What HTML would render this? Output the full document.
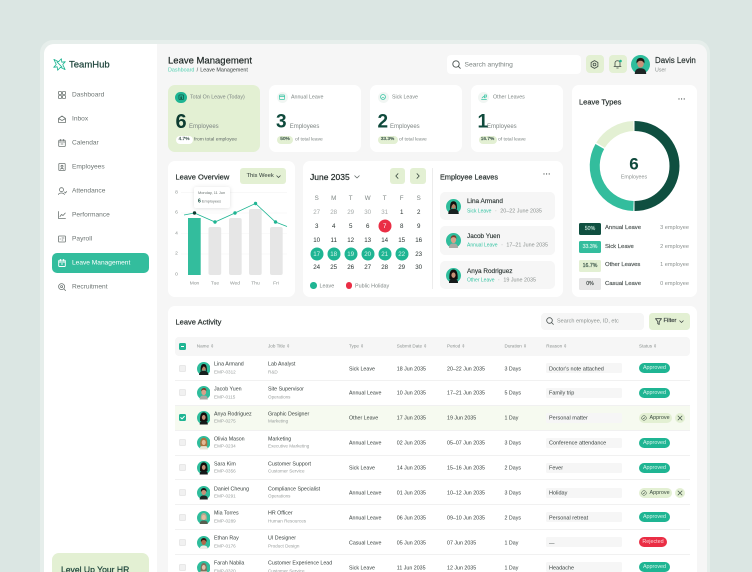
<!DOCTYPE html>
<html><head><meta charset="utf-8"><title>TeamHub Leave Management</title>
<style>
*{box-sizing:border-box;margin:0;padding:0}
html,body{width:752px;height:572px;overflow:hidden;background:#dbe6e3;font-family:"Liberation Sans",sans-serif;color:#2b3533}
#root{position:relative;width:752px;height:572px;overflow:hidden;background:#dbe6e3}
.a{position:absolute}
.t{position:absolute;white-space:nowrap;line-height:1;transform:translateY(calc(-50% + 1px))}
.c{text-align:center;transform:translate(-50%,calc(-50% + 1px))}
.r{transform:translate(-100%,calc(-50% + 1px))}
.m{-webkit-text-stroke:.2px currentColor}
.card{position:absolute;background:#fff;border-radius:7px}
.nav{font-size:6.6px;color:#6d7573;left:72px}
.ic{position:absolute;fill:none;stroke:#6d7573;stroke-width:1.4;stroke-linecap:round;stroke-linejoin:round}
.lab{font-size:5.3px;color:#7d8583}
.num{font-size:19px;font-weight:700;color:#0f4a3c;margin-top:-1px}
.emp{font-size:6px;color:#7d8583}
.pill{position:absolute;height:8px;border-radius:4px;background:#e3f0d3;font-size:4.8px;text-align:center;line-height:8.8px;color:#2f4a40;-webkit-text-stroke:.15px currentColor}
.sm{font-size:4.9px;color:#7d8583}
.ttl{font-size:7.5px;color:#27302e;-webkit-text-stroke:.2px currentColor}
.cal{font-size:6.2px;color:#2b3533}
.gr{color:#a6abaa}
.dot{position:absolute;width:13px;height:13px;border-radius:50%;background:#1fb593;transform:translate(-50%,-50%)}
.ax{font-size:4.9px;color:#8b918f}
.li{position:absolute;left:440px;width:115px;height:28.5px;background:#f6f6f6;border-radius:5px}
.row{position:absolute;left:175px;width:515px;height:24.9px;border-bottom:1.2px solid #f1f1f1}
.row .t{font-size:5.3px;color:#3a4240}
.row .s{font-size:4.6px;color:#9a9f9e}
.row .q{font-size:5.5px}
.cb{position:absolute;left:4px;top:8.5px;width:7px;height:7px;border-radius:1.5px;background:#f1f1f1;border:.6px solid #e8e8e8}
.av{position:absolute;left:21.5px;top:5.5px;width:13.5px;height:13.5px}
.rs{position:absolute;left:371px;top:7px;width:76px;height:10px;background:#f6f6f6;border-radius:1.5px}
.ok{position:absolute;left:464px;top:7px;width:31px;height:10px;border-radius:5px;background:#1fb593;color:#d5f3ea;font-size:5.4px;text-align:center;line-height:10.8px}
.no{position:absolute;left:464px;top:7px;width:28px;height:10px;border-radius:5px;background:#ea2e45;color:#ffd5da;font-size:5.4px;text-align:center;line-height:10.8px}
.ap{position:absolute;left:464px;top:7px;width:33px;height:10px;border-radius:5px;background:#e3f0d3;color:#3a4a40;font-size:5.4px;line-height:10.8px;padding-left:10.5px}
.xb{position:absolute;left:499.500px;top:7px;width:10px;height:10px;border-radius:50%;background:#e3f0d3}
.th{font-size:4.6px;color:#8b918f}
.leg{position:absolute;left:579px;width:22px;height:11.5px;border-radius:1.5px;font-size:5.2px;text-align:center;line-height:12.3px;-webkit-text-stroke:.15px currentColor}
.ll{font-size:5.9px;color:#4a5250;left:605px;-webkit-text-stroke:.15px currentColor}
.lv{font-size:5.6px;color:#8b918f;left:689px}
.ib{position:absolute;width:18px;height:18px;border-radius:4px;background:#e3f0d3}
.en{font-size:6.4px;color:#2b3533;left:467px;-webkit-text-stroke:.15px currentColor}
.ed{font-size:5.4px;left:467px;color:#8b918f}
.ed b{color:#35c4a3;font-weight:400;font-size:5px}
.ed i{font-style:normal;margin:0 3.500px}
</style></head>
<body><div id="root">
<svg width="0" height="0" style="position:absolute">
<symbol id="a1" viewBox="0 0 20 20"><circle cx="10" cy="10" r="10" fill="#2fbd9c"/><path d="M3 20c0-5 3-7 7-7s7 2 7 7z" fill="#17201f"/><ellipse cx="10" cy="9" rx="3.2" ry="4" fill="#b98367"/><path d="M5.5 14C5 6 6.500 3 10 3s5 3 4.500 11l-1.500-1c.5-3 0-5-3-6.500C8 8 7 10 7 13z" fill="#16110f"/></symbol>
<symbol id="a2" viewBox="0 0 20 20"><circle cx="10" cy="10" r="10" fill="#2fbd9c"/><path d="M4 20c0-5 3-6 6-6s6 1 6 6z" fill="#a9a9a4"/><ellipse cx="10" cy="9" rx="3.500" ry="4.500" fill="#d9a08a"/><path d="M6 8c0-3 2-5 4.500-5S14 5 14 8c-1-2-3-2.500-4-2.500S7 6 6 8z" fill="#7a3f2c"/></symbol>
<symbol id="a3" viewBox="0 0 20 20"><circle cx="10" cy="10" r="10" fill="#2fbd9c"/><path d="M4 20c0-4 2-6 6-6s6 2 6 6z" fill="#15191a"/><path d="M4.500 15C4 6 6 2 10 2s6 4 5.500 13z" fill="#14100f"/><ellipse cx="10" cy="9.500" rx="2.800" ry="3.600" fill="#c79076"/></symbol>
<symbol id="a4" viewBox="0 0 20 20"><circle cx="10" cy="10" r="10" fill="#2fbd9c"/><path d="M4 20c0-4 2-6 6-6s6 2 6 6z" fill="#e8e4d4"/><path d="M5 15C4 6 6 2.500 10 2.500S16 6 15 15z" fill="#a9733f"/><ellipse cx="10" cy="9.500" rx="3" ry="3.800" fill="#e5b894"/></symbol>
<symbol id="a5" viewBox="0 0 20 20"><circle cx="10" cy="10" r="10" fill="#2fbd9c"/><path d="M4 20c0-5 3-6 6-6s6 1 6 6z" fill="#1d2625"/><ellipse cx="10" cy="9" rx="3.500" ry="4.300" fill="#c99078"/><path d="M6 9c-1-4 1.500-6 4-6s5 2 4 6c-1-2-2-3-4-3S7 7 6 9z" fill="#1d1613"/></symbol>
<symbol id="a6" viewBox="0 0 20 20"><circle cx="10" cy="10" r="10" fill="#2fbd9c"/><path d="M4 20c0-5 3-6 6-6s6 1 6 6z" fill="#585f50"/><path d="M5.500 13C5 6 7 3 10 3s5 3 4.500 10z" fill="#b7a88f"/><ellipse cx="10" cy="9.500" rx="3" ry="3.800" fill="#e3bda0"/></symbol>
<symbol id="a7" viewBox="0 0 20 20"><circle cx="10" cy="10" r="10" fill="#2fbd9c"/><path d="M4 20c0-5 3-6 6-6s6 1 6 6z" fill="#efeee8"/><ellipse cx="10" cy="9" rx="3.500" ry="4.300" fill="#b2694c"/><path d="M6 9c-1-4 1.500-6 4-6s5 2 4 6c-1-2-2-3-4-3S7 7 6 9z" fill="#33170e"/></symbol>
<symbol id="a8" viewBox="0 0 20 20"><circle cx="10" cy="10" r="10" fill="#2fbd9c"/><path d="M4 20c0-5 3-7 6-7s6 2 6 7z" fill="#c9bfae"/><path d="M5.500 15C5 6 7 3 10 3s5 3 4.500 12z" fill="#81705d"/><ellipse cx="10" cy="9.500" rx="2.800" ry="3.600" fill="#e3c1aa"/></symbol>
<symbol id="ck" viewBox="0 0 10 10"><path d="M2.500 5.200l1.800 1.800 3.300-3.600" fill="none" stroke="#fff" stroke-width="1.400" stroke-linecap="round" stroke-linejoin="round"/></symbol>
<symbol id="apv" viewBox="0 0 10 10"><circle cx="5" cy="5" r="3.800" fill="none" stroke="#3a4a40" stroke-width=".9"/><path d="M3.300 5.100l1.200 1.200 2.200-2.400" fill="none" stroke="#3a4a40" stroke-width=".9"/></symbol>
<symbol id="xx" viewBox="0 0 10 10"><path d="M3 3l4 4M7 3l-4 4" fill="none" stroke="#4a5a50" stroke-width=".8" stroke-linecap="round"/></symbol>
</svg>

<!-- frame -->
<div class="a" style="left:40px;top:40px;width:670px;height:532px;background:#e6eeeb;border-radius:13px 13px 0 0"></div>
<div class="a" style="left:44px;top:44px;width:663px;height:528px;background:#f6f6f6;border-radius:10px 10px 0 0"></div>
<div class="a" style="left:44px;top:44px;width:113px;height:528px;background:#fff;border-radius:10px 0 0 0"></div>

<!-- logo -->
<svg class="a" style="left:53px;top:57.500px" width="13" height="13" viewBox="0 0 14 14" fill="none" stroke="#1fb593" stroke-width=".9" stroke-linejoin="round"><path d="M1 1.500L6 4 9 .8 9.500 4.500 13.200 4 10.500 7 13 12.500 8 10 5 13.200 4.500 9.500.8 10 3.500 7z"/><path d="M4 4l6 6"/></svg>
<div class="t m" style="left:69px;top:64px;font-size:9.500px;color:#173f36">TeamHub</div>

<!-- nav -->
<svg class="ic" style="left:58px;top:90.500px;stroke-width:.8" width="8" height="8" viewBox="0 0 8 8"><rect x=".5" y=".5" width="3" height="3" rx=".5"/><rect x="4.500" y=".5" width="3" height="3" rx=".5"/><rect x=".5" y="4.500" width="3" height="3" rx=".5"/><rect x="4.500" y="4.500" width="3" height="3" rx=".5"/></svg>
<div class="t nav" style="top:94.500px">Dashboard</div>
<svg class="ic" style="left:58px;top:114.500px;stroke-width:.8" width="8" height="8" viewBox="0 0 8 8"><path d="M.5 3.500L4 1l3.500 2.500v4h-7zM.5 3.500L4 5.500l3.500-2"/></svg>
<div class="t nav" style="top:118.500px">Inbox</div>
<svg class="ic" style="left:58px;top:138.500px;stroke-width:.8" width="8" height="8" viewBox="0 0 8 8"><rect x=".7" y="1.200" width="6.600" height="6.300" rx=".8"/><path d="M.7 3h6.600M2.500.4v1.400M5.500.4v1.400M3 5h2"/></svg>
<div class="t nav" style="top:142.500px">Calendar</div>
<svg class="ic" style="left:58px;top:162.500px;stroke-width:.8" width="8" height="8" viewBox="0 0 8 8"><rect x=".8" y=".5" width="6.400" height="7" rx=".7"/><circle cx="4" cy="3.300" r="1"/><path d="M2.400 6.200c.5-1 2.700-1 3.200 0"/></svg>
<div class="t nav" style="top:166.500px">Employees</div>
<svg class="ic" style="left:58px;top:186.500px;stroke-width:.8" width="9" height="8" viewBox="0 0 9 8"><circle cx="3.500" cy="2.700" r="2"/><path d="M.5 7.500c.5-2 5-2 6 0M6.500 5l1 1 1-1.500"/></svg>
<div class="t nav" style="top:190.500px">Attendance</div>
<svg class="ic" style="left:58px;top:210.500px;stroke-width:.8" width="8" height="8" viewBox="0 0 8 8"><path d="M.5.500v7h7M2 5.500L3.500 3.500 5 4.500 7.300 2"/></svg>
<div class="t nav" style="top:214.500px">Performance</div>
<svg class="ic" style="left:58px;top:234.500px;stroke-width:.8" width="8" height="8" viewBox="0 0 8 8"><rect x=".5" y="1" width="7" height="6" rx=".7"/><path d="M4 3h2M4 5h1M2 4h.5"/></svg>
<div class="t nav" style="top:238.500px">Payroll</div>
<div class="a" style="left:52px;top:252.500px;width:97px;height:20px;background:#33bd9d;border-radius:5px"></div>
<svg class="ic" style="left:58px;top:258.500px;stroke:#fff;stroke-width:.9" width="8" height="8" viewBox="0 0 8 8"><rect x=".7" y="1.200" width="6.600" height="6.300" rx=".8"/><path d="M.7 3h6.600M2.500.4v1.400M5.500.4v1.400M3.500 5h1"/></svg>
<div class="t nav" style="top:262.500px;color:#fff">Leave Management</div>
<svg class="ic" style="left:58px;top:282.500px;stroke-width:.8" width="8" height="8" viewBox="0 0 8 8"><circle cx="3.600" cy="3.600" r="3"/><circle cx="3.600" cy="3.600" r="1"/><path d="M6 6l1.600 1.600"/></svg>
<div class="t nav" style="top:286.500px">Recruitment</div>

<div class="a" style="left:52px;top:553px;width:97px;height:19px;background:#e3f0d3;border-radius:7px 7px 0 0;overflow:hidden"><div class="t m" style="left:9px;top:15.500px;font-size:8.600px;color:#173f36">Level Up Your HR</div></div>

<!-- header -->
<div class="t m" style="left:168px;top:59.500px;font-size:9.500px;color:#1d2624">Leave Management</div>
<div class="t" style="left:168px;top:69.800px;font-size:5.400px;color:#3a4240"><span style="color:#4fcfb0">Dashboard</span> <span style="margin:0 .7px">/</span> Leave Management</div>
<div class="a" style="left:447px;top:55px;width:134px;height:18.500px;background:#fff;border-radius:4px"></div>
<svg class="ic" style="left:452px;top:60px;stroke:#4a5250;stroke-width:.9" width="9" height="9" viewBox="0 0 9 9"><circle cx="4" cy="4" r="3.200"/><path d="M6.400 6.400L8.300 8.300"/></svg>
<div class="t" style="left:464.500px;top:64.700px;font-size:6.700px;color:#7d8583">Search anything</div>
<div class="ib" style="left:586px;top:55px"></div>
<svg class="ic" style="left:590px;top:59.500px;stroke:#3f4a46;stroke-width:.8" width="9" height="9" viewBox="0 0 9 9"><path d="M4.500.6l3.400 1.900v4L4.500 8.400 1.100 6.500v-4z"/><circle cx="4.500" cy="4.500" r="1.400"/></svg>
<div class="ib" style="left:608.500px;top:55px"></div>
<svg class="ic" style="left:613px;top:59px;stroke:#3f4a46;stroke-width:.8" width="10" height="10" viewBox="0 0 10 10"><path d="M2 7.500V4c0-3 5-3 5 0v3.500zM1 7.500h7M3.700 9h1.600"/><circle cx="7.500" cy="2" r="1.300" fill="#1fb593" stroke="none"/></svg>
<svg class="a" style="left:631px;top:55px" width="19" height="19"><use href="#a5"/></svg>
<div class="t m" style="left:655px;top:59.500px;font-size:7.900px;color:#2b3533">Davis Levin</div>
<div class="t" style="left:655px;top:69.800px;font-size:5.300px;color:#8b918f">User</div>

<!-- stat cards -->
<div class="card" style="left:168px;top:84.500px;width:92px;height:67px;background:#e3f0d3"></div>
<div class="a" style="left:175px;top:91.500px;width:11.500px;height:11.500px;border-radius:50%;background:#1fb593"></div>
<svg class="ic" style="left:177.500px;top:94px;stroke:#0f4a3c;stroke-width:.7" width="6.500" height="6.500" viewBox="0 0 7 7"><rect x="1" y="1" width="5" height="5" rx=".8"/><path d="M3 3h1v2H3z"/></svg>
<div class="t lab" style="left:190px;top:97px">Total On Leave (Today)</div>
<div class="t num" style="left:175.500px;top:121.500px;color:#0d3c31;font-size:20px">6</div>
<div class="t emp" style="left:189px;top:126px">Employees</div>
<div class="pill" style="left:175.500px;top:136px;width:17px;background:#fff">4.7%</div>
<div class="t sm" style="left:194px;top:140.200px;color:#5f6866">from total employee</div>

<div class="card" style="left:269px;top:84.500px;width:92px;height:67px"></div>
<div class="a" style="left:276.500px;top:91.500px;width:11px;height:11px;border-radius:50%;background:#f1f6f3"></div>
<svg class="ic" style="left:279px;top:94px;stroke:#35c4a3;stroke-width:.7" width="6" height="6" viewBox="0 0 6 6"><rect x=".5" y="1" width="5" height="4.500" rx=".5"/><path d="M.5 2.500h5"/></svg>
<div class="t lab" style="left:291px;top:97px">Annual Leave</div>
<div class="t num" style="left:276px;top:121.500px">3</div>
<div class="t emp" style="left:289.700px;top:126px">Employees</div>
<div class="pill" style="left:277px;top:136px;width:16px">50%</div>
<div class="t sm" style="left:295px;top:140.200px">of total leave</div>

<div class="card" style="left:370px;top:84.500px;width:92px;height:67px"></div>
<div class="a" style="left:377.500px;top:91.500px;width:11px;height:11px;border-radius:50%;background:#f1f6f3"></div>
<svg class="ic" style="left:380px;top:94px;stroke:#35c4a3;stroke-width:.7" width="6" height="6" viewBox="0 0 6 6"><circle cx="3" cy="3" r="2.500"/><path d="M1.800 4c.6-.6 1.800-.6 2.400 0"/></svg>
<div class="t lab" style="left:392px;top:97px">Sick Leave</div>
<div class="t num" style="left:377.500px;top:121.500px">2</div>
<div class="t emp" style="left:390px;top:126px">Employees</div>
<div class="pill" style="left:377.500px;top:136px;width:20px">33.3%</div>
<div class="t sm" style="left:399px;top:140.200px">of total leave</div>

<div class="card" style="left:471px;top:84.500px;width:92px;height:67px"></div>
<div class="a" style="left:478px;top:91.500px;width:11px;height:11px;border-radius:50%;background:#f1f6f3"></div>
<svg class="ic" style="left:480.500px;top:94px;stroke:#35c4a3;stroke-width:.7" width="6" height="6" viewBox="0 0 6 6"><path d="M.5 5.500h5M1 4l1.500-1.500L4 4M3.500 1h2v2h-2z"/></svg>
<div class="t lab" style="left:493px;top:97px">Other Leaves</div>
<div class="t num" style="left:477.500px;top:121.500px">1</div>
<div class="t emp" style="left:487px;top:126px">Employees</div>
<div class="pill" style="left:478.500px;top:136px;width:18px">16.7%</div>
<div class="t sm" style="left:498px;top:140.200px">of total leave</div>

<!-- leave types -->
<div class="card" style="left:572px;top:84.500px;width:125px;height:212px"></div>
<div class="t ttl" style="left:579px;top:101px">Leave Types</div>
<div class="t" style="left:682px;top:99.500px;font-size:7px;font-weight:700;transform:translate(-50%,-50%);color:#3a4240;letter-spacing:.3px">···</div>
<svg class="a" style="left:584px;top:116px" width="100" height="100" viewBox="0 0 100 100" fill="none" stroke-width="10">
<path d="M50.500 10A40 40 0 0 1 50.500 90" stroke="#0f4f40"/>
<path d="M49.500 90A40 40 0 0 1 15.800 30.500" stroke="#33bd9d"/>
<path d="M16.500 29.200A40 40 0 0 1 49.500 10" stroke="#e3f0d3"/>
</svg>
<div class="t c" style="left:634px;top:162.500px;font-size:17px;font-weight:700;color:#0f4a3c">6</div>
<div class="t c" style="left:634px;top:176.500px;font-size:5.300px;color:#8b918f">Employees</div>
<div class="leg" style="top:223px;background:#0f4f40;color:#bfe0d4">50%</div>
<div class="t ll" style="top:228.400px">Annual Leave</div><div class="t lv r" style="top:228.400px">3 employee</div>
<div class="leg" style="top:241.300px;background:#33bd9d;color:#d5f3ea">33.3%</div>
<div class="t ll" style="top:246.900px">Sick Leave</div><div class="t lv r" style="top:246.900px">2 employee</div>
<div class="leg" style="top:260px;background:#e3f0d3;color:#2f4a40">16.7%</div>
<div class="t ll" style="top:265.400px">Other Leaves</div><div class="t lv r" style="top:265.400px">1 employee</div>
<div class="leg" style="top:278.300px;background:#e6e6e6;color:#3a4240">0%</div>
<div class="t ll" style="top:283.900px">Casual Leave</div><div class="t lv r" style="top:283.900px">0 employee</div>

<!-- overview -->
<div class="card" style="left:168px;top:161px;width:127px;height:136px"></div>
<div class="t ttl" style="left:175.500px;top:176px">Leave Overview</div>
<div class="a" style="left:240px;top:168px;width:46px;height:16px;background:#e3f0d3;border-radius:3px"></div>
<div class="t" style="left:246.500px;top:176.200px;font-size:5.800px;color:#2b3533">This Week</div>
<svg class="ic" style="left:276px;top:174.500px;stroke:#3a4240;stroke-width:.7" width="5" height="3.500" viewBox="0 0 5 3.500"><path d="M.7.700L2.500 2.500 4.300.7"/></svg>
<svg class="a" style="left:168px;top:161px" width="127" height="136" viewBox="168 161 127 136" fill="none">
<g stroke="#f5f5f5" stroke-width=".6"><path d="M181 192.600H287M181 213H287M181 233.500H287M181 254H287"/></g>
<rect x="188" y="218" width="12.700" height="57" fill="#33bd9d"/>
<rect x="208.500" y="227" width="12.700" height="48" rx="2" fill="#e6e6e6"/>
<rect x="229" y="218" width="12.700" height="57" rx="2" fill="#e6e6e6"/>
<rect x="249" y="209" width="12.700" height="66" rx="2" fill="#e6e6e6"/>
<rect x="270" y="227" width="12.700" height="48" rx="2" fill="#e6e6e6"/>
<path d="M184 215L194.500 213L215 222L235 213L255.500 203.500L275.500 222L287 226.500" stroke="#1fb593" stroke-width=".8"/>
<g fill="#1fb593"><circle cx="215" cy="222" r="1.700"/><circle cx="235" cy="213" r="1.700"/><circle cx="255.500" cy="203.500" r="1.700"/><circle cx="275.500" cy="222" r="1.700"/></g>
<circle cx="194.500" cy="213" r="1.700" fill="#0d3c31"/>
</svg>
<div class="t ax c" style="left:176.500px;top:192.500px">8</div>
<div class="t ax c" style="left:176.500px;top:213px">6</div>
<div class="t ax c" style="left:176.500px;top:233.500px">4</div>
<div class="t ax c" style="left:176.500px;top:254px">2</div>
<div class="t ax c" style="left:176.500px;top:275px">0</div>
<div class="t ax c" style="left:194.500px;top:284.300px">Mon</div>
<div class="t ax c" style="left:215px;top:284.300px">Tue</div>
<div class="t ax c" style="left:235px;top:284.300px">Wed</div>
<div class="t ax c" style="left:255.500px;top:284.300px">Thu</div>
<div class="t ax c" style="left:276px;top:284.300px">Fri</div>
<div class="a" style="left:194px;top:187px;width:36px;height:20.500px;background:#fff;border-radius:2px;box-shadow:0 .5px 4px rgba(0,0,0,.13)"></div>
<div class="t" style="left:198px;top:192.300px;font-size:3.900px;color:#6d7573">Monday, 11 Jun</div>
<div class="t" style="left:198px;top:200.500px;font-size:3.900px;color:#6d7573"><b style="font-size:5px;color:#0f4a3c">6</b>&nbsp;Employees</div>

<!-- calendar -->
<div class="card" style="left:303px;top:161px;width:260px;height:136px"></div>
<div class="a" style="left:432px;top:168px;width:.8px;height:121px;background:#ececec"></div>
<div class="t m" style="left:310px;top:175.800px;font-size:8.500px;color:#1d2624">June 2035</div>
<svg class="ic" style="left:354px;top:175px;stroke:#5a6260;stroke-width:.7" width="6" height="4" viewBox="0 0 6 4"><path d="M.7.700L3 3l2.300-2.300"/></svg>
<div class="a" style="left:389.500px;top:168px;width:15.500px;height:16px;border-radius:3px;background:#e3f0d3"></div>
<div class="a" style="left:410px;top:168px;width:15.500px;height:16px;border-radius:3px;background:#e3f0d3"></div>
<svg class="ic" style="left:395px;top:173px;stroke:#3a4a40;stroke-width:.8" width="4" height="6" viewBox="0 0 4 6"><path d="M3 .7L.8 3 3 5.300"/></svg>
<svg class="ic" style="left:416px;top:173px;stroke:#3a4a40;stroke-width:.8" width="4" height="6" viewBox="0 0 4 6"><path d="M1 .7L3.200 3 1 5.300"/></svg>

<div class="t cal c" style="left:316.700px;top:198.300px;color:#7d8583">S</div><div class="t cal c" style="left:333.700px;top:198.300px;color:#7d8583">M</div><div class="t cal c" style="left:350.700px;top:198.300px;color:#7d8583">T</div><div class="t cal c" style="left:367.700px;top:198.300px;color:#7d8583">W</div><div class="t cal c" style="left:384.700px;top:198.300px;color:#7d8583">T</div><div class="t cal c" style="left:401.700px;top:198.300px;color:#7d8583">F</div><div class="t cal c" style="left:418.700px;top:198.300px;color:#7d8583">S</div>

<div class="t cal c gr" style="left:316.700px;top:212.300px">27</div><div class="t cal c gr" style="left:333.700px;top:212.300px">28</div><div class="t cal c gr" style="left:350.700px;top:212.300px">29</div><div class="t cal c gr" style="left:367.700px;top:212.300px">30</div><div class="t cal c gr" style="left:384.700px;top:212.300px">31</div><div class="t cal c" style="left:401.700px;top:212.300px">1</div><div class="t cal c" style="left:418.700px;top:212.300px">2</div>

<div class="t cal c" style="left:316.700px;top:226px">3</div><div class="t cal c" style="left:333.700px;top:226px">4</div><div class="t cal c" style="left:350.700px;top:226px">5</div><div class="t cal c" style="left:367.700px;top:226px">6</div>
<div class="dot" style="left:384.700px;top:226.300px;background:#ea2e45"></div><div class="t cal c" style="left:384.700px;top:226px;color:#fff">7</div>
<div class="t cal c" style="left:401.700px;top:226px">8</div><div class="t cal c" style="left:418.700px;top:226px">9</div>

<div class="t cal c" style="left:316.700px;top:239.800px">10</div><div class="t cal c" style="left:333.700px;top:239.800px">11</div><div class="t cal c" style="left:350.700px;top:239.800px">12</div><div class="t cal c" style="left:367.700px;top:239.800px">13</div><div class="t cal c" style="left:384.700px;top:239.800px">14</div><div class="t cal c" style="left:401.700px;top:239.800px">15</div><div class="t cal c" style="left:418.700px;top:239.800px">16</div>

<div class="dot" style="left:316.700px;top:253.800px"></div><div class="t cal c" style="left:316.700px;top:253.500px;color:#d5f3ea">17</div>
<div class="dot" style="left:333.700px;top:253.800px"></div><div class="t cal c" style="left:333.700px;top:253.500px;color:#d5f3ea">18</div>
<div class="dot" style="left:350.700px;top:253.800px"></div><div class="t cal c" style="left:350.700px;top:253.500px;color:#d5f3ea">19</div>
<div class="dot" style="left:367.700px;top:253.800px"></div><div class="t cal c" style="left:367.700px;top:253.500px;color:#d5f3ea">20</div>
<div class="dot" style="left:384.700px;top:253.800px"></div><div class="t cal c" style="left:384.700px;top:253.500px;color:#d5f3ea">21</div>
<div class="dot" style="left:401.700px;top:253.800px"></div><div class="t cal c" style="left:401.700px;top:253.500px;color:#d5f3ea">22</div>
<div class="t cal c" style="left:418.700px;top:253.500px">23</div>

<div class="t cal c" style="left:316.700px;top:267.300px">24</div><div class="t cal c" style="left:333.700px;top:267.300px">25</div><div class="t cal c" style="left:350.700px;top:267.300px">26</div><div class="t cal c" style="left:367.700px;top:267.300px">27</div><div class="t cal c" style="left:384.700px;top:267.300px">28</div><div class="t cal c" style="left:401.700px;top:267.300px">29</div><div class="t cal c" style="left:418.700px;top:267.300px">30</div>

<div class="a" style="left:310.300px;top:282.300px;width:6.500px;height:6.500px;border-radius:50%;background:#1fb593"></div>
<div class="t" style="left:319.500px;top:285.500px;font-size:5.400px;color:#7d8583">Leave</div>
<div class="a" style="left:345.500px;top:282.300px;width:6.500px;height:6.500px;border-radius:50%;background:#ea2e45"></div>
<div class="t" style="left:355px;top:285.500px;font-size:5.400px;color:#7d8583">Public Holiday</div>

<!-- employee leaves -->
<div class="t ttl" style="left:440px;top:176px;font-size:7.300px">Employee Leaves</div>
<div class="t" style="left:547px;top:174.500px;font-size:7px;font-weight:700;transform:translate(-50%,-50%);color:#3a4240;letter-spacing:.3px">···</div>
<div class="li" style="top:191.700px"></div>
<svg class="a" style="left:446px;top:198.500px" width="15" height="15"><use href="#a1"/></svg>
<div class="t en" style="top:201.300px">Lina Armand</div>
<div class="t ed" style="top:210.500px"><b>Sick Leave</b><i>·</i>20–22 June 2035</div>
<div class="li" style="top:226px"></div>
<svg class="a" style="left:446px;top:233px" width="15" height="15"><use href="#a2"/></svg>
<div class="t en" style="top:236.300px">Jacob Yuen</div>
<div class="t ed" style="top:245px"><b>Annual Leave</b><i>·</i>17–21 June 2035</div>
<div class="li" style="top:260.800px"></div>
<svg class="a" style="left:446px;top:267.500px" width="15" height="15"><use href="#a3"/></svg>
<div class="t en" style="top:270.800px">Anya Rodriguez</div>
<div class="t ed" style="top:279.800px"><b>Other Leave</b><i>·</i>19 June 2035</div>

<!-- table -->
<div class="card" style="left:168px;top:306px;width:529px;height:266px;border-radius:7px 7px 0 0"></div>
<div class="t ttl" style="left:175.500px;top:320.800px">Leave Activity</div>
<div class="a" style="left:541px;top:313px;width:103px;height:16.500px;background:#f6f6f6;border-radius:4px"></div>
<svg class="ic" style="left:546px;top:317px;stroke:#4a5250;stroke-width:.8" width="8" height="8" viewBox="0 0 8 8"><circle cx="3.500" cy="3.500" r="2.800"/><path d="M5.600 5.600L7.400 7.400"/></svg>
<div class="t" style="left:557px;top:321px;font-size:5.500px;color:#8b918f">Search employee, ID, etc</div>
<div class="a" style="left:649px;top:313px;width:41px;height:16.500px;background:#e3f0d3;border-radius:3.500px"></div>
<svg class="ic" style="left:655px;top:317.500px;stroke:#3a4240;stroke-width:.8" width="7" height="7" viewBox="0 0 7 7"><path d="M.5.700h6L4.200 3.500v3l-1.400-.8V3.500z"/></svg>
<div class="t m" style="left:663.500px;top:321px;font-size:5.800px;color:#3a4240">Filter</div>
<svg class="ic" style="left:679px;top:320px;stroke:#3a4240;stroke-width:.7" width="5" height="3.500" viewBox="0 0 5 3.500"><path d="M.7.700L2.500 2.500 4.300.7"/></svg>

<div class="a" style="left:175px;top:336.500px;width:515px;height:19.500px;background:#f6f6f6;border-radius:4px"></div>
<div class="a" style="left:179px;top:343px;width:7px;height:7px;border-radius:1.500px;background:#1fb593"></div>
<div class="a" style="left:180.800px;top:346px;width:3.400px;height:1px;background:#fff"></div>
<div class="t th" style="left:196.800px;top:345.700px">Name ⇕</div>
<div class="t th" style="left:268px;top:345.700px">Job Title ⇕</div>
<div class="t th" style="left:349px;top:345.700px">Type ⇕</div>
<div class="t th" style="left:396.800px;top:345.700px">Submit Date ⇕</div>
<div class="t th" style="left:447px;top:345.700px">Period ⇕</div>
<div class="t th" style="left:504.500px;top:345.700px">Duration ⇕</div>
<div class="t th" style="left:546.300px;top:345.700px">Reason ⇕</div>
<div class="t th" style="left:639px;top:345.700px">Status ⇕</div>

<div class="row" style="top:356px">
<div class="cb"></div><svg class="av"><use href="#a1"/></svg>
<div class="t" style="left:39px;top:8px">Lina Armand</div><div class="t s" style="left:39px;top:15.700px">EMP-0312</div>
<div class="t" style="left:93px;top:8px">Lab Analyst</div><div class="t s" style="left:93px;top:15.700px">R&amp;D</div>
<div class="t" style="left:174px;top:12.600px">Sick Leave</div><div class="t" style="left:221.800px;top:12.600px">18 Jun 2035</div><div class="t" style="left:272px;top:12.600px">20–22 Jun 2035</div><div class="t" style="left:329.500px;top:12.600px">3 Days</div>
<div class="rs"></div><div class="t q" style="left:374px;top:12.600px">Doctor's note attached</div>
<div class="ok">Approved</div></div>

<div class="row" style="top:380.900px">
<div class="cb"></div><svg class="av"><use href="#a2"/></svg>
<div class="t" style="left:39px;top:8px">Jacob Yuen</div><div class="t s" style="left:39px;top:15.700px">EMP-0115</div>
<div class="t" style="left:93px;top:8px">Site Supervisor</div><div class="t s" style="left:93px;top:15.700px">Operations</div>
<div class="t" style="left:174px;top:12.600px">Annual Leave</div><div class="t" style="left:221.800px;top:12.600px">10 Jun 2035</div><div class="t" style="left:272px;top:12.600px">17–21 Jun 2035</div><div class="t" style="left:329.500px;top:12.600px">5 Days</div>
<div class="rs"></div><div class="t q" style="left:374px;top:12.600px">Family trip</div>
<div class="ok">Approved</div></div>

<div class="row" style="top:405.800px;background:#f6faf0">
<div class="cb" style="background:#1fb593;border:0"><svg width="7" height="7" style="display:block"><use href="#ck"/></svg></div><svg class="av"><use href="#a3"/></svg>
<div class="t" style="left:39px;top:8px">Anya Rodriguez</div><div class="t s" style="left:39px;top:15.700px">EMP-0275</div>
<div class="t" style="left:93px;top:8px">Graphic Designer</div><div class="t s" style="left:93px;top:15.700px">Marketing</div>
<div class="t" style="left:174px;top:12.600px">Other Leave</div><div class="t" style="left:221.800px;top:12.600px">17 Jun 2035</div><div class="t" style="left:272px;top:12.600px">19 Jun 2035</div><div class="t" style="left:329.500px;top:12.600px">1 Day</div>
<div class="rs"></div><div class="t q" style="left:374px;top:12.600px">Personal matter</div>
<div class="ap">Approve<svg class="a" style="left:2px;top:2px" width="6" height="6"><use href="#apv"/></svg></div><div class="xb"><svg width="10" height="10" style="display:block"><use href="#xx"/></svg></div></div>

<div class="row" style="top:430.700px">
<div class="cb"></div><svg class="av"><use href="#a4"/></svg>
<div class="t" style="left:39px;top:8px">Olivia Mason</div><div class="t s" style="left:39px;top:15.700px">EMP-0234</div>
<div class="t" style="left:93px;top:8px">Marketing</div><div class="t s" style="left:93px;top:15.700px">Executive Marketing</div>
<div class="t" style="left:174px;top:12.600px">Annual Leave</div><div class="t" style="left:221.800px;top:12.600px">02 Jun 2035</div><div class="t" style="left:272px;top:12.600px">05–07 Jun 2035</div><div class="t" style="left:329.500px;top:12.600px">3 Days</div>
<div class="rs"></div><div class="t q" style="left:374px;top:12.600px">Conference attendance</div>
<div class="ok">Approved</div></div>

<div class="row" style="top:455.600px">
<div class="cb"></div><svg class="av"><use href="#a3"/></svg>
<div class="t" style="left:39px;top:8px">Sara Kim</div><div class="t s" style="left:39px;top:15.700px">EMP-0356</div>
<div class="t" style="left:93px;top:8px">Customer Support</div><div class="t s" style="left:93px;top:15.700px">Customer Service</div>
<div class="t" style="left:174px;top:12.600px">Sick Leave</div><div class="t" style="left:221.800px;top:12.600px">14 Jun 2035</div><div class="t" style="left:272px;top:12.600px">15–16 Jun 2035</div><div class="t" style="left:329.500px;top:12.600px">2 Days</div>
<div class="rs"></div><div class="t q" style="left:374px;top:12.600px">Fever</div>
<div class="ok">Approved</div></div>

<div class="row" style="top:480.500px">
<div class="cb"></div><svg class="av"><use href="#a5"/></svg>
<div class="t" style="left:39px;top:8px">Daniel Cheung</div><div class="t s" style="left:39px;top:15.700px">EMP-0291</div>
<div class="t" style="left:93px;top:8px">Compliance Specialist</div><div class="t s" style="left:93px;top:15.700px">Operations</div>
<div class="t" style="left:174px;top:12.600px">Annual Leave</div><div class="t" style="left:221.800px;top:12.600px">01 Jun 2035</div><div class="t" style="left:272px;top:12.600px">10–12 Jun 2035</div><div class="t" style="left:329.500px;top:12.600px">3 Days</div>
<div class="rs"></div><div class="t q" style="left:374px;top:12.600px">Holiday</div>
<div class="ap">Approve<svg class="a" style="left:2px;top:2px" width="6" height="6"><use href="#apv"/></svg></div><div class="xb"><svg width="10" height="10" style="display:block"><use href="#xx"/></svg></div></div>

<div class="row" style="top:505.400px">
<div class="cb"></div><svg class="av"><use href="#a6"/></svg>
<div class="t" style="left:39px;top:8px">Mia Torres</div><div class="t s" style="left:39px;top:15.700px">EMP-0289</div>
<div class="t" style="left:93px;top:8px">HR Officer</div><div class="t s" style="left:93px;top:15.700px">Human Resources</div>
<div class="t" style="left:174px;top:12.600px">Annual Leave</div><div class="t" style="left:221.800px;top:12.600px">06 Jun 2035</div><div class="t" style="left:272px;top:12.600px">09–10 Jun 2035</div><div class="t" style="left:329.500px;top:12.600px">2 Days</div>
<div class="rs"></div><div class="t q" style="left:374px;top:12.600px">Personal retreat</div>
<div class="ok">Approved</div></div>

<div class="row" style="top:530.300px">
<div class="cb"></div><svg class="av"><use href="#a7"/></svg>
<div class="t" style="left:39px;top:8px">Ethan Ray</div><div class="t s" style="left:39px;top:15.700px">EMP-0176</div>
<div class="t" style="left:93px;top:8px">UI Designer</div><div class="t s" style="left:93px;top:15.700px">Product Design</div>
<div class="t" style="left:174px;top:12.600px">Casual Leave</div><div class="t" style="left:221.800px;top:12.600px">05 Jun 2035</div><div class="t" style="left:272px;top:12.600px">07 Jun 2035</div><div class="t" style="left:329.500px;top:12.600px">1 Day</div>
<div class="rs"></div><div class="t q" style="left:374px;top:12.600px">—</div>
<div class="no">Rejected</div></div>

<div class="row" style="top:555.200px;height:16.800px;border-bottom:0;overflow:hidden">
<div class="cb"></div><svg class="av"><use href="#a8"/></svg>
<div class="t" style="left:39px;top:8px">Farah Nabila</div><div class="t s" style="left:39px;top:15.700px">EMP-0320</div>
<div class="t" style="left:93px;top:8px">Customer Experience Lead</div><div class="t s" style="left:93px;top:15.700px">Customer Service</div>
<div class="t" style="left:174px;top:12.600px">Sick Leave</div><div class="t" style="left:221.800px;top:12.600px">11 Jun 2035</div><div class="t" style="left:272px;top:12.600px">12 Jun 2035</div><div class="t" style="left:329.500px;top:12.600px">1 Day</div>
<div class="rs"></div><div class="t q" style="left:374px;top:12.600px">Headache</div>
<div class="ok">Approved</div></div>
</div></body></html>
